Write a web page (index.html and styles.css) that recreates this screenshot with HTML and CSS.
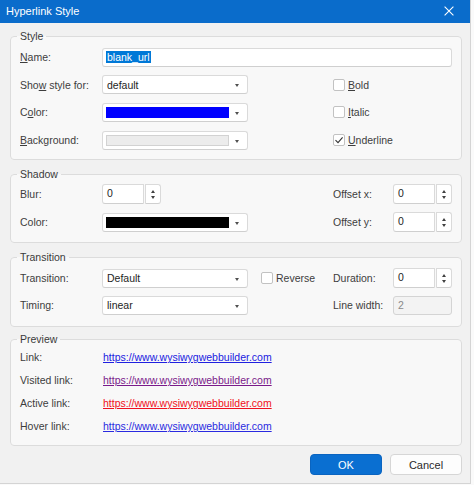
FILE: index.html
```html
<!DOCTYPE html>
<html>
<head>
<meta charset="utf-8">
<title>Hyperlink Style</title>
<link rel="stylesheet" href="styles.css">
</head>
<body>
<div class="window">
  <div class="titlebar">
    <span class="title">Hyperlink Style</span>
    <svg class="close" width="10" height="10" viewBox="0 0 10 10"><path d="M0.6 0.6L9.4 9.4M9.4 0.6L0.6 9.4" stroke="#ffffff" stroke-width="1.1" fill="none"/></svg>
  </div>
  <div class="content">
    <fieldset class="group g-style">
      <legend>Style</legend>
      <div class="grid rows-style">
        <span class="lbl"><u>N</u>ame:</span>
        <div class="input name"><span class="sel">blank_url</span></div>

        <span class="lbl">Sho<u>w</u> style for:</span>
        <div class="select"><span class="val">default</span><i class="arrow"></i></div>
        <span></span>
        <div class="check wide"><span class="box"></span><span><u>B</u>old</span></div>

        <span class="lbl">C<u>o</u>lor:</span>
        <div class="select"><span class="swatch sw-blue"></span><i class="arrow"></i></div>
        <span></span>
        <div class="check wide"><span class="box"></span><span><u>I</u>talic</span></div>

        <span class="lbl"><u>B</u>ackground:</span>
        <div class="select"><span class="swatch sw-empty"></span><i class="arrow"></i></div>
        <span></span>
        <div class="check wide"><span class="box"><svg width="10" height="10" viewBox="0 0 10 10"><path d="M1.5 5.2L4 7.6L8.6 2.4" stroke="#333" stroke-width="1.1" fill="none"/></svg></span><span><u>U</u>nderline</span></div>
      </div>
    </fieldset>

    <fieldset class="group g-shadow">
      <legend>Shadow</legend>
      <div class="grid rows-shadow">
        <span class="lbl">Blur:</span>
        <div class="spinwrap"><div class="spin"><span class="spin-in">0</span><span class="spin-btn"><i class="up"></i><i class="down"></i></span></div></div>
        <span></span>
        <span class="lbl">Offset x:</span>
        <div class="spin"><span class="spin-in">0</span><span class="spin-btn"><i class="up"></i><i class="down"></i></span></div>

        <span class="lbl">Color:</span>
        <div class="select"><span class="swatch sw-black"></span><i class="arrow"></i></div>
        <span></span>
        <span class="lbl">Offset y:</span>
        <div class="spin"><span class="spin-in">0</span><span class="spin-btn"><i class="up"></i><i class="down"></i></span></div>
      </div>
    </fieldset>

    <fieldset class="group g-trans">
      <legend>Transition</legend>
      <div class="grid rows-trans">
        <span class="lbl">Transition:</span>
        <div class="select"><span class="val">Default</span><i class="arrow"></i></div>
        <div class="check rev"><span class="box"></span><span>Reverse</span></div>
        <span class="lbl">Duration:</span>
        <div class="spin"><span class="spin-in">0</span><span class="spin-btn"><i class="up"></i><i class="down"></i></span></div>

        <span class="lbl">Timing:</span>
        <div class="select"><span class="val">linear</span><i class="arrow"></i></div>
        <span></span>
        <span class="lbl">Line width:</span>
        <div class="input disabled"><span class="val">2</span></div>
      </div>
    </fieldset>

    <fieldset class="group g-preview">
      <legend>Preview</legend>
      <div class="grid rows-preview">
        <span class="lbl">Link:</span>
        <span class="link l-link">https://www.wysiwygwebbuilder.com</span>
        <span class="lbl">Visited link:</span>
        <span class="link l-visited">https://www.wysiwygwebbuilder.com</span>
        <span class="lbl">Active link:</span>
        <span class="link l-active">https://www.wysiwygwebbuilder.com</span>
        <span class="lbl">Hover link:</span>
        <span class="link l-hover">https://www.wysiwygwebbuilder.com</span>
      </div>
    </fieldset>

    <div class="buttons">
      <button class="btn primary">OK</button>
      <button class="btn">Cancel</button>
    </div>
  </div>
</div>
</body>
</html>
```

FILE: styles.css
```css
* { box-sizing: border-box; }
html, body { margin: 0; padding: 0; }
body {
  width: 474px;
  height: 485px;
  background: #fafafa;
  font-family: "Liberation Sans", Arial, sans-serif;
  font-size: 10.5px;
  color: #3a3a3a;
  overflow: hidden;
}
.window {
  width: 471px;
  height: 484px;
  background: #f1f1f1;
  border-right: 1px solid #d4d4d4;
  border-bottom: 1px solid #d4d4d4;
}
.titlebar {
  height: 23px;
  background: #0a6ccb;
  color: #ffffff;
  display: flex;
  align-items: center;
  justify-content: space-between;
  padding: 0 16px 0 6px;
}
.title { font-size: 11px; line-height: 13px; }
.close { display: block; margin-top: -1px; }

.content {
  padding: 6px 8px 0 10px;
}
.group {
  margin: 0;
  border: 1px solid #dcdcdc;
  border-radius: 4px;
  background: #f8f8f8;
  padding: 4px 10px 9px 9px;
  min-width: 0;
}
.group legend {
  padding: 0 3px;
  margin-left: -3px;
  line-height: 14px;
  color: #3a3a3a;
}
.g-shadow { margin-top: 7px; padding-top: 3px; padding-bottom: 10px; }
.g-trans { margin-top: 7px; padding-bottom: 11px; }
.g-preview { margin-top: 5px; padding-top: 3px; padding-bottom: 11px; }

.grid {
  display: grid;
  grid-template-columns: 82px 146px 85px 60px 59px;
  align-items: center;
}
.rows-style { grid-auto-rows: 20px; row-gap: 7.7px; }
.rows-shadow { grid-auto-rows: 20px; row-gap: 8px; }
.rows-trans { grid-auto-rows: 20px; row-gap: 7px; }
.rows-preview { grid-auto-rows: 16px; row-gap: 7px; grid-template-columns: 82px 1fr; }

.lbl { white-space: nowrap; color: #3d3d3d; }
u { text-decoration-thickness: 1px; text-underline-offset: 1px; }

.input, .select, .spin-in, .spin-btn {
  background: #ffffff;
  border: 1px solid #dadada;
  border-bottom-color: #cfcfcf;
}
.input {
  height: 19px;
  border-radius: 3px;
  display: flex;
  align-items: center;
  padding-left: 3px;
  color: #1e1e1e;
}
.name { grid-column: 2 / 6; }
.sel {
  background: #0078d7;
  color: #ffffff;
  line-height: 12px;
  padding: 0 1px;
}
.disabled { background: #f3f3f3; color: #8a8a8a; border-color: #d4d4d4; padding-left: 4px; }

.select {
  height: 19px;
  border-radius: 3px;
  display: flex;
  align-items: center;
  padding: 0 0 0 3px;
  position: relative;
  color: #1e1e1e;
}
.select .val { padding-left: 1px; }
.arrow {
  position: absolute;
  right: 8px;
  top: 8px;
  width: 0;
  height: 0;
  border-left: 2.5px solid transparent;
  border-right: 2.5px solid transparent;
  border-top: 3px solid #505050;
}
.swatch {
  display: block;
  width: 123px;
  height: 11px;
}
.sw-blue { background: #0000ff; }
.sw-black { background: #000000; }
.sw-empty { background: #ececec; border: 1px solid #d2d2d2; }

.check {
  display: flex;
  align-items: center;
  gap: 3px;
  color: #3d3d3d;
}
.wide { grid-column: 4 / 6; }
.rev { padding-left: 13px; }
.box {
  width: 12px;
  height: 12px;
  border: 1px solid #c2c2c2;
  border-radius: 2px;
  background: #ffffff;
  display: flex;
  align-items: center;
  justify-content: center;
  flex: none;
}
.box svg { display: block; }

.spinwrap { display: flex; }
.spin {
  display: flex;
  width: 59px;
  height: 20px;
}
.spin-in {
  flex: 1;
  display: flex;
  align-items: flex-start;
  padding: 2px 0 0 4px;
  border-radius: 3px 0 0 3px;
  color: #1e1e1e;
}
.spin-btn {
  width: 16px;
  margin-left: 1px;
  border-radius: 0 3px 3px 0;
  display: flex;
  flex-direction: column;
  align-items: center;
  justify-content: center;
  gap: 3px;
}
.spinwrap .spin { width: 59px; }
.up, .down {
  width: 0;
  height: 0;
  border-left: 2px solid transparent;
  border-right: 2px solid transparent;
}
.up { border-bottom: 3px solid #404040; }
.down { border-top: 3px solid #404040; }

.link {
  text-decoration: underline;
  text-decoration-thickness: 1px;
  text-underline-offset: 1px;
  white-space: nowrap;
  padding-left: 1px;
}
.l-link { color: #2020e0; }
.l-visited { color: #7a1a8a; }
.l-active { color: #f01020; }
.l-hover { color: #2a2ae0; }

.buttons {
  display: flex;
  justify-content: flex-end;
  gap: 8px;
  margin-top: 8px;
  padding-right: 0;
}
.btn {
  width: 72px;
  height: 21px;
  border-radius: 4px;
  border: 1px solid #d6d6d6;
  background: #fdfdfd;
  font-family: "Liberation Sans", Arial, sans-serif;
  font-size: 11px;
  color: #2a2a2a;
  padding: 0;
}
.primary {
  background: #0a6fd1;
  border-color: #0a64c0;
  color: #ffffff;
}
```
